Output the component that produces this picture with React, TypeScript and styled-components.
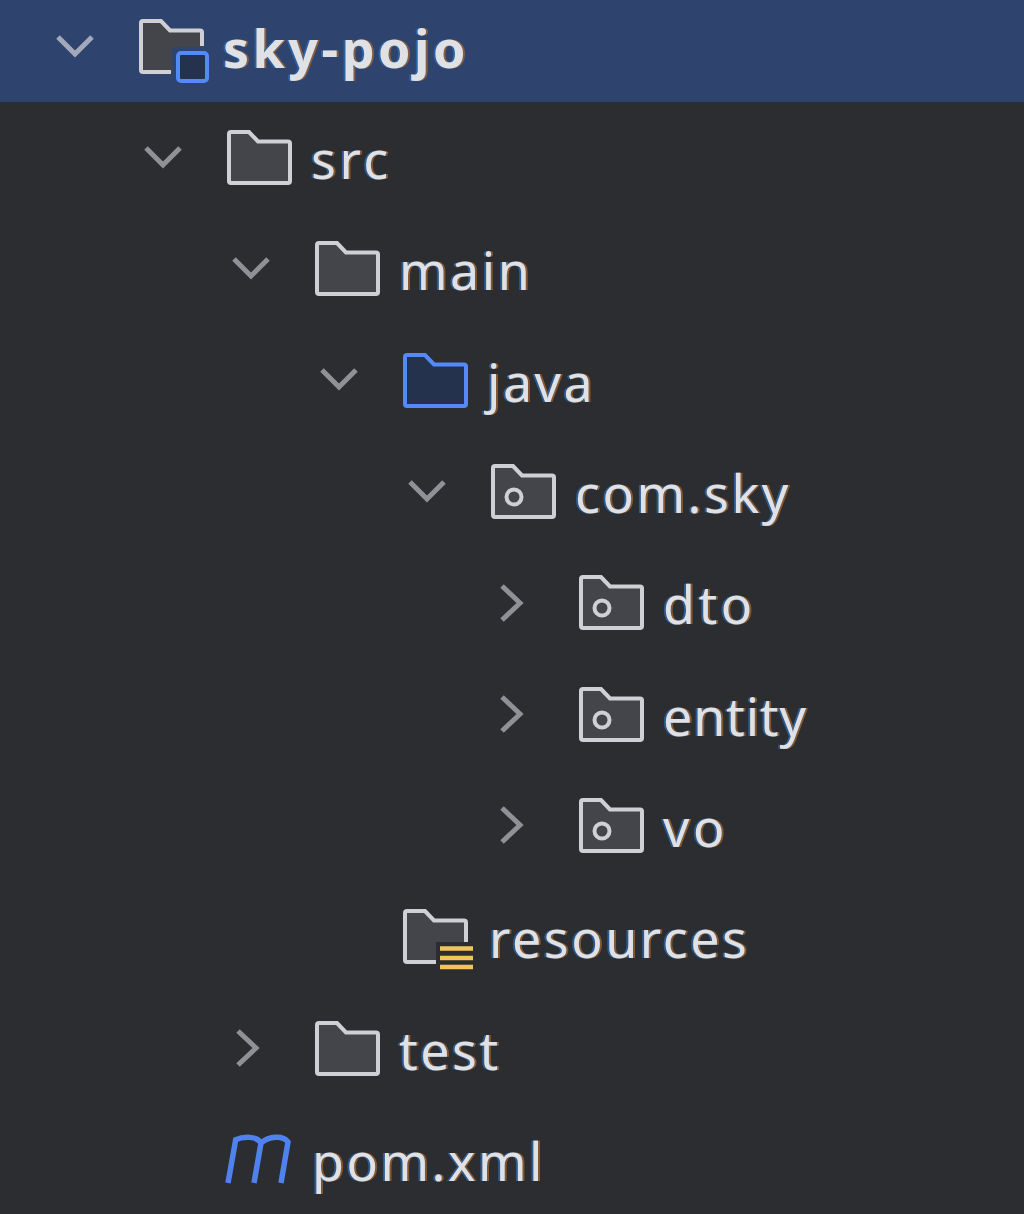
import React from 'react';
import styled, { createGlobalStyle } from 'styled-components';

const GlobalStyle = createGlobalStyle`
  html, body {
    margin: 0;
    padding: 0;
    background: #2b2d30;
  }
`;

const Tree = styled.div`
  width: 1024px;
  height: 1214px;
  overflow: hidden;
  background: #2b2d30;
  font-family: 'Noto Sans', 'Open Sans', sans-serif;
`;

const Row = styled.div<{ $level: number; $selected?: boolean }>`
  display: flex;
  align-items: center;
  box-sizing: border-box;
  height: ${(p) => (p.$selected ? '102px' : '111.3px')};
  padding-left: ${(p) => 52 + p.$level * 88}px;
  padding-bottom: ${(p) => (p.$selected ? '9px' : '0')};
  background: ${(p) => (p.$selected ? '#2e436e' : 'transparent')};
`;

const ChevronSlot = styled.div<{ $open?: boolean }>`
  display: flex;
  justify-content: center;
  flex: none;
  width: 46px;
  margin-right: 41px;
  transform: translateX(${(p) => (p.$open ? '0' : '-3px')});
`;

const ChevronIcon = styled.svg<{ $selected?: boolean }>`
  display: block;
  fill: none;
  stroke: ${(p) => (p.$selected ? '#a3a9ba' : '#8f9197')};
  stroke-width: 5;
`;

const IconBox = styled.svg`
  display: block;
  flex: none;
  overflow: visible;
`;

const Label = styled.span<{ $selected?: boolean; $gap?: number; $tracking?: number }>`
  margin-left: ${(p) => p.$gap ?? 19}px;
  margin-top: 3px;
  font-size: 52px;
  line-height: 60px;
  letter-spacing: ${(p) => p.$tracking ?? 2.5}px;
  font-weight: ${(p) => (p.$selected ? 700 : 400)};
  color: #dfe1e5;
  white-space: nowrap;
  text-shadow: -2px 0 rgba(42, 110, 185, 0.7), 2px 0 rgba(170, 105, 50, 0.7);
`;

type Kind = 'module' | 'folder' | 'source' | 'package' | 'resources' | 'maven';

type Node = {
  name: string;
  level: number;
  kind: Kind;
  open?: boolean;
  gap?: number;
  tracking?: number;
};

const nodes: Node[] = [
  { name: 'sky-pojo', level: 0, kind: 'module', open: true, tracking: 3.5 },
  { name: 'src', level: 1, kind: 'folder', open: true, tracking: 3.5 },
  { name: 'main', level: 2, kind: 'folder', open: true },
  { name: 'java', level: 3, kind: 'source', open: true },
  { name: 'com.sky', level: 4, kind: 'package', open: true },
  { name: 'dto', level: 5, kind: 'package', open: false, tracking: 3.5 },
  { name: 'entity', level: 5, kind: 'package', open: false, tracking: 0.8 },
  { name: 'vo', level: 5, kind: 'package', open: false, tracking: 3.5 },
  { name: 'resources', level: 3, kind: 'resources', gap: 21 },
  { name: 'test', level: 2, kind: 'folder', open: false },
  { name: 'pom.xml', level: 1, kind: 'maven', gap: 20 },
];

const FOLDER =
  'M4 2H22L31 11.5H61a2 2 0 0 1 2 2V51a2 2 0 0 1-2 2H4a2 2 0 0 1-2-2V4a2 2 0 0 1 2-2Z';

function Chevron({ open, selected }: { open: boolean; selected?: boolean }) {
  if (open) {
    return (
      <ChevronIcon $selected={selected} width="38" height="28" viewBox="0 0 38 28">
        <path d="M2 4L19 21L36 4" />
      </ChevronIcon>
    );
  }
  return (
    <ChevronIcon width="26" height="38" viewBox="0 0 26 38">
      <path d="M3 2L21 19L3 36" />
    </ChevronIcon>
  );
}

function FileIcon({ kind }: { kind: Kind }) {
  if (kind === 'maven') {
    return (
      <IconBox width="65" height="50" viewBox="0 0 65 50">
        <path
          d="M1 49L9 4M8 6C17 2 30 2 34 9L27 49M34 9C42 2 56 1 61 8L54 49"
          fill="none"
          stroke="#4f82ee"
          strokeWidth="5.5"
        />
      </IconBox>
    );
  }
  if (kind === 'module') {
    return (
      <IconBox width="65" height="55" viewBox="0 0 65 55">
        <path d="M4 2H22L31 11.5H61a2 2 0 0 1 2 2V28H33V53H4a2 2 0 0 1-2-2V4a2 2 0 0 1 2-2Z" fill="#43454a" />
        <path
          d="M32 53H4a2 2 0 0 1-2-2V4a2 2 0 0 1 2-2H22L31 11.5H61a2 2 0 0 1 2 2V27"
          fill="none"
          stroke="#ced0d6"
          strokeWidth="4"
        />
        <rect x="39" y="34" width="29" height="28" rx="3" fill="#25324d" stroke="#548af7" strokeWidth="4" />
      </IconBox>
    );
  }
  if (kind === 'resources') {
    return (
      <IconBox width="65" height="55" viewBox="0 0 65 55">
        <path d="M4 2H22L31 11.5H61a2 2 0 0 1 2 2V33H33V53H4a2 2 0 0 1-2-2V4a2 2 0 0 1 2-2Z" fill="#43454a" />
        <path
          d="M33 53H4a2 2 0 0 1-2-2V4a2 2 0 0 1 2-2H22L31 11.5H61a2 2 0 0 1 2 2V33"
          fill="none"
          stroke="#ced0d6"
          strokeWidth="4"
        />
        <path d="M37 39.5H70M37 49H70M37 58H70" stroke="#f2c55c" strokeWidth="4.5" />
      </IconBox>
    );
  }
  const source = kind === 'source';
  return (
    <IconBox width="65" height="55" viewBox="0 0 65 55">
      <path
        d={FOLDER}
        fill={source ? '#25324d' : '#43454a'}
        stroke={source ? '#548af7' : '#ced0d6'}
        strokeWidth="4"
      />
      {kind === 'package' && <circle cx="23" cy="33" r="7.5" fill="none" stroke="#ced0d6" strokeWidth="4" />}
    </IconBox>
  );
}

function App() {
  return (
    <Tree>
      <GlobalStyle />
      {nodes.map((n) => {
        const selected = n.kind === 'module';
        return (
          <Row key={n.name} $level={n.level} $selected={selected}>
            <ChevronSlot $open={n.open}>
              {n.open !== undefined && <Chevron open={n.open} selected={selected} />}
            </ChevronSlot>
            <FileIcon kind={n.kind} />
            <Label $selected={selected} $gap={n.gap} $tracking={n.tracking}>
              {n.name}
            </Label>
          </Row>
        );
      })}
    </Tree>
  );
}

export default App;
